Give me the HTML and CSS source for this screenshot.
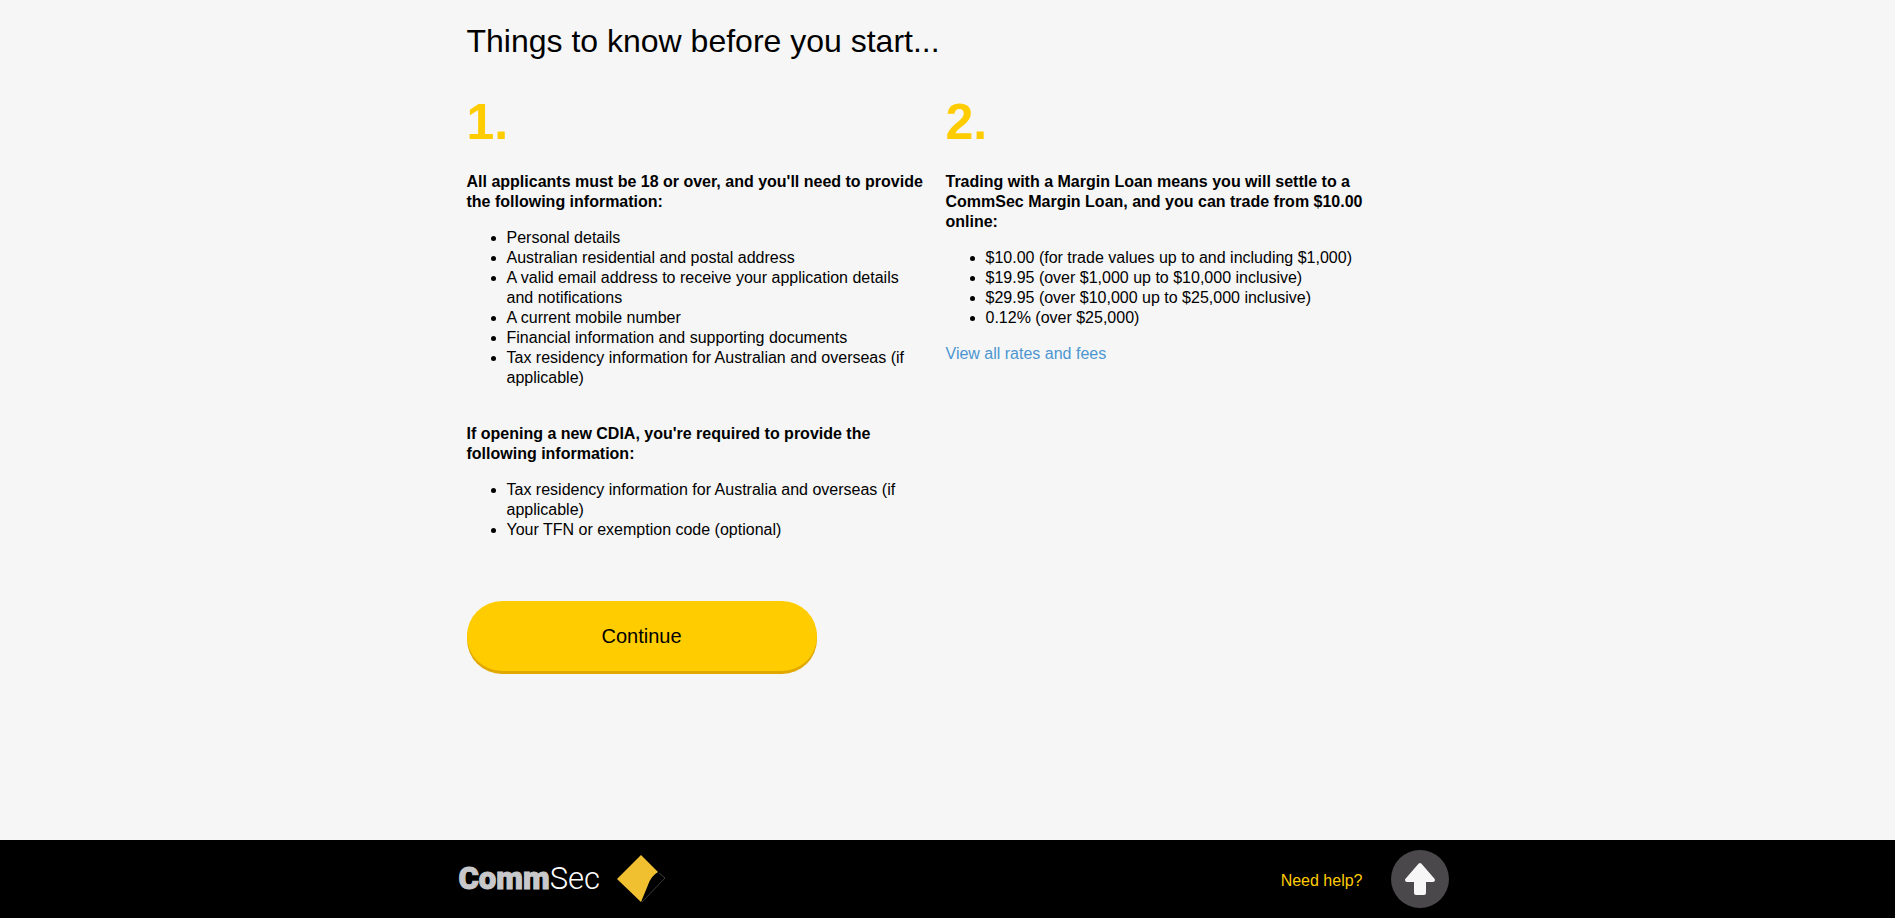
FILE: index.html
```
<!DOCTYPE html>
<html lang="en">
<head>
  <meta charset="UTF-8">
  <title>CommSec - Things to know before you start</title>
  <link rel="stylesheet" href="styles.css">
</head>
<body>
  <main class="container">
    <h1>Things to know before you start...</h1>

    <div class="columns">
      <section>
        <div class="step">1.</div>
        <p class="lead">All applicants must be 18 or over, and you'll need to provide the following information:</p>
        <ul>
          <li>Personal details</li>
          <li>Australian residential and postal address</li>
          <li>A valid email address to receive your application details and notifications</li>
          <li>A current mobile number</li>
          <li>Financial information and supporting documents</li>
          <li>Tax residency information for Australian and overseas (if applicable)</li>
        </ul>
        <br>
        <p class="lead">If opening a new CDIA, you're required to provide the following information:</p>
        <ul>
          <li>Tax residency information for Australia and overseas (if applicable)</li>
          <li>Your TFN or exemption code (optional)</li>
        </ul>
      </section>

      <section>
        <div class="step">2.</div>
        <p class="lead">Trading with a Margin Loan means you will settle to a CommSec Margin Loan, and you can trade from $10.00 online:</p>
        <ul>
          <li>$10.00 (for trade values up to and including $1,000)</li>
          <li>$19.95 (over $1,000 up to $10,000 inclusive)</li>
          <li>$29.95 (over $10,000 up to $25,000 inclusive)</li>
          <li>0.12% (over $25,000)</li>
        </ul>
        <p><a class="rates" href="#">View all rates and fees</a></p>
      </section>
    </div>

    <button type="button" class="continue">Continue</button>
  </main>

  <footer>
    <div class="footer-inner">
      <a class="logo" href="#">
        <span class="logo-text"><b>Comm</b><span class="sec">Sec</span></span>
        <svg width="50" height="50" viewBox="0 0 50 50" aria-hidden="true">
          <path d="M25 1 L42 18 Q35 22 32 31 L25 48 L1 25 Z" fill="#f0c030"/>
          <path d="M43 19 L49 24 L26 48" fill="none" stroke="#3c3c3c"/>
        </svg>
      </a>
      <a class="help" href="#">Need help?</a>
      <button type="button" class="to-top" aria-label="Back to top">
        <svg width="58" height="58" viewBox="0 0 58 58" aria-hidden="true">
          <circle cx="29" cy="29" r="29" fill="#4a484b"/>
          <path d="M29 15 L42 30 H33 V43 H25 V30 H16 Z" fill="#f6f6f6" stroke="#f6f6f6" stroke-width="4" stroke-linejoin="round"/>
        </svg>
      </button>
    </div>
  </footer>
</body>
</html>
```

FILE: styles.css
```
* { box-sizing: border-box; }
body {
  margin: 0;
  min-height: 100vh;
  display: flex;
  flex-direction: column;
  background: #f6f6f6;
  color: #000;
  font: 16px/20px "Liberation Sans", Arial, sans-serif;
}
a { text-decoration: none; }
button { border: 0; padding: 0; font-family: inherit; cursor: pointer; }

.container { width: 100%; max-width: 962px; margin: 0 auto; padding-right: 4px; flex: 1; }
h1 { margin: 20px 0 0; font-size: 32px; line-height: 42px; font-weight: normal; }
.columns { display: grid; grid-template-columns: 1fr 1fr; }
.columns section { padding-right: 20px; }
.step { margin: 30px 0 20px; color: #fc0; font-size: 50px; line-height: 60px; font-weight: bold; }
.columns p, ul { margin: 0 0 16px; }
ul { padding-left: 40px; }
.lead { font-weight: bold; }
.rates { color: #4b96d1; }

.continue {
  display: block;
  width: 350px;
  height: 70px;
  margin: 45px 0 40px;
  border-radius: 35px;
  background: #fc0;
  box-shadow: 0 3px 0 #e0a800;
  color: #000;
  font-size: 20px;
}

footer { background: #000; }
.footer-inner {
  display: flex;
  align-items: center;
  max-width: 1002px;
  height: 78px;
  margin: 0 auto;
  padding-left: 12px;
}
.logo { display: flex; align-items: center; gap: 16px; margin-right: auto; }
.logo-text { font-family: Roboto, sans-serif; font-size: 31px; line-height: 40px; color: #fff; }
.logo-text b { font-weight: 900; color: #c8c8ca; -webkit-text-stroke: 1px #c8c8ca; }
.sec { font-weight: 300; }
.help { margin-right: 28px; padding-top: 3px; color: #fc0; }
.to-top { display: flex; background: none; }
```
